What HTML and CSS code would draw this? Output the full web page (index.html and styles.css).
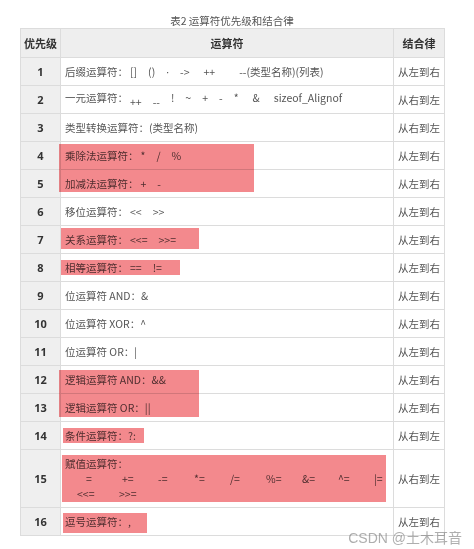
FILE: index.html
```html
<!DOCTYPE html>
<html lang="zh">
<head>
<meta charset="utf-8">
<title>运算符优先级和结合律</title>
<link rel="stylesheet" href="styles.css">
</head>
<body>
<div class="page">
  <div class="caption">表2 运算符优先级和结合律</div>
  <div class="wrap">
    <table class="prec">
      <colgroup>
        <col class="c1"><col class="c2"><col class="c3">
      </colgroup>
      <thead>
        <tr><th class="lv">优先级</th><th>运算符</th><th>结合律</th></tr>
      </thead>
      <tbody>
        <tr><td class="lv">1</td><td class="ops">后缀运算符：<span class="op">[]</span><span class="op">()</span><span class="op dot">·</span><span class="op">-&gt;</span><span class="op w1">++</span><span class="op w2">--(类型名称)(列表)</span></td><td class="as">从左到右</td></tr>
        <tr><td class="lv">2</td><td class="ops">一元运算符：<span class="op sub">++</span><span class="op sub">--</span><span class="op">!</span><span class="op">~</span><span class="op">+</span><span class="op">-</span><span class="op">*</span><span class="op w1">&amp;</span><span class="op w1">sizeof_Alignof</span></td><td class="as">从右到左</td></tr>
        <tr><td class="lv">3</td><td class="ops">类型转换运算符：(类型名称)</td><td class="as">从右到左</td></tr>
        <tr><td class="lv">4</td><td class="ops">乘除法运算符：<span class="op">*</span><span class="op">/</span><span class="op">%</span></td><td class="as">从左到右</td></tr>
        <tr><td class="lv">5</td><td class="ops">加减法运算符：<span class="op">+</span><span class="op">-</span></td><td class="as">从左到右</td></tr>
        <tr><td class="lv">6</td><td class="ops">移位运算符：<span class="op">&lt;&lt;</span><span class="op">&gt;&gt;</span></td><td class="as">从左到右</td></tr>
        <tr><td class="lv">7</td><td class="ops">关系运算符：<span class="op">&lt;&lt;=</span><span class="op">&gt;&gt;=</span></td><td class="as">从左到右</td></tr>
        <tr><td class="lv">8</td><td class="ops">相等运算符：<span class="op">==</span><span class="op">!=</span></td><td class="as">从左到右</td></tr>
        <tr><td class="lv">9</td><td class="ops">位运算符 AND：&amp;</td><td class="as">从左到右</td></tr>
        <tr><td class="lv">10</td><td class="ops">位运算符 XOR：^</td><td class="as">从左到右</td></tr>
        <tr><td class="lv">11</td><td class="ops">位运算符 OR：|</td><td class="as">从左到右</td></tr>
        <tr><td class="lv">12</td><td class="ops">逻辑运算符 AND：&amp;&amp;</td><td class="as">从左到右</td></tr>
        <tr><td class="lv">13</td><td class="ops">逻辑运算符 OR：||</td><td class="as">从左到右</td></tr>
        <tr><td class="lv">14</td><td class="ops">条件运算符：?:</td><td class="as">从右到左</td></tr>
        <tr class="tall"><td class="lv">15</td><td class="ops">
          <div class="line">赋值运算符：</div>
          <div class="assign9"><span>=</span><span>+=</span><span>-=</span><span>*=</span><span>/=</span><span>%=</span><span>&amp;=</span><span>^=</span><span>|=</span></div>
          <div class="assign2"><span>&lt;&lt;=</span><span>&gt;&gt;=</span></div>
        </td><td class="as">从右到左</td></tr>
        <tr><td class="lv">16</td><td class="ops">逗号运算符：,</td><td class="as">从左到右</td></tr>
      </tbody>
    </table>
    <div class="mark m45"></div>
    <div class="mark m7"></div>
    <div class="mark m8"></div>
    <div class="mark m1213"></div>
    <div class="mark m14"></div>
    <div class="mark m15"></div>
    <div class="mark m16"></div>
  </div>
  <div class="wm">CSDN @土木耳音</div>
</div>
</body>
</html>
```

FILE: styles.css
```css
* { box-sizing: border-box; }

body {
  margin: 0;
  background: #ffffff;
  font-family: "Noto Sans CJK SC", "Open Sans", sans-serif;
  color: #555;
}

.page {
  position: relative;
  width: 474px;
  height: 549px;
  padding-top: 13px;
  overflow: hidden;
}

.caption {
  width: 464px;
  text-align: center;
  font-size: 10.5px;
  line-height: 15px;
  color: #555;
}

.wrap {
  position: relative;
  margin-left: 20px;
  width: 424px;
}

.prec {
  border-collapse: collapse;
  table-layout: fixed;
  width: 424px;
  font-size: 10.5px;
}

.c1 { width: 40px; }
.c2 { width: 333px; }
.c3 { width: 51px; }

.prec th,
.prec td {
  border: 1px solid #dcdcdc;
  padding: 0 4px;
  vertical-align: middle;
  line-height: 15px;
}

.prec thead tr { height: 29px; }
.prec tbody tr { height: 28px; }
.prec tbody tr.tall { height: 58px; }

.prec th {
  background: #eeeeee;
  font-weight: bold;
  font-size: 11px;
  color: #333;
  text-align: center;
}

.prec th.lv { padding: 0 1px; }

.prec td.lv {
  background: #efefef;
  font-family: "Open Sans", "Noto Sans CJK SC", sans-serif;
  font-weight: bold;
  font-size: 11px;
  color: #333;
  text-align: center;
  padding: 0;
}

.prec td.as {
  padding: 0 4px;
  white-space: nowrap;
  color: #555;
}

.ops { white-space: nowrap; }

.op { margin-left: 11px; }
.ops .op:first-child { margin-left: 2px; }
.op.w1 { margin-left: 14px; }
.op.w2 { margin-left: 24px; }
.op.sub { vertical-align: -4px; }
.op.dot { font-family: "Open Sans", sans-serif; }

.assign9 {
  display: grid;
  grid-template-columns: repeat(9, 36px);
  padding-left: 21px;
}

.assign2 {
  display: grid;
  grid-template-columns: repeat(2, 42px);
  padding-left: 12px;
}

.mark {
  position: absolute;
  background: #f3898d;
  mix-blend-mode: multiply;
  pointer-events: none;
}

.m45   { left: 39px; top: 116px; width: 195px; height: 48px; }
.m7    { left: 41px; top: 200px; width: 138px; height: 21px; }
.m8    { left: 41px; top: 232px; width: 119px; height: 15px; }
.m1213 { left: 39px; top: 342px; width: 140px; height: 47px; }
.m14   { left: 43px; top: 400px; width: 81px;  height: 15px; }
.m15   { left: 42px; top: 427px; width: 324px; height: 47px; }
.m16   { left: 43px; top: 485px; width: 84px;  height: 20px; }

.wm {
  position: absolute;
  right: 12px;
  top: 529px;
  font-family: "Liberation Sans", "Noto Sans CJK SC", sans-serif;
  font-size: 14px;
  line-height: 18px;
  color: rgba(120, 120, 120, 0.6);
  white-space: nowrap;
}
```
